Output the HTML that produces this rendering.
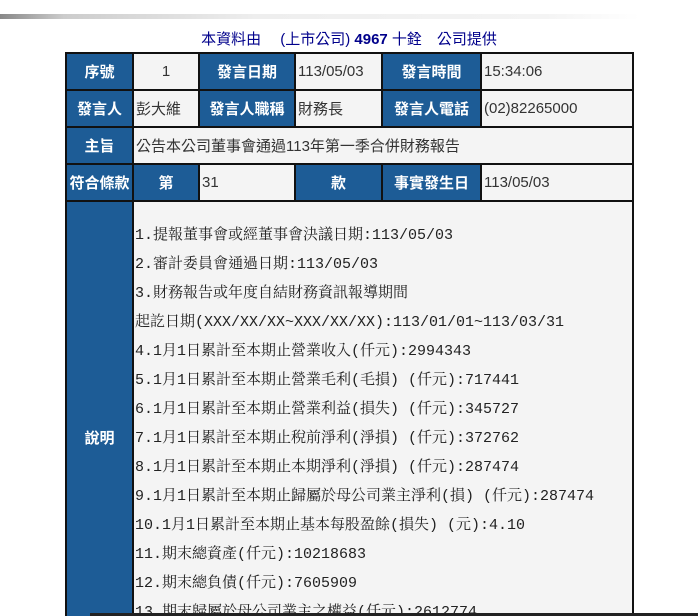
<!DOCTYPE html>
<html><head><meta charset="utf-8"><style>
html,body{margin:0;width:698px;height:616px;overflow:hidden;background:#fff}
body{font-family:"Liberation Sans","Noto Sans CJK TC",sans-serif;position:relative}
.wrap{position:absolute;left:0;top:0;width:698px;height:616px;overflow:hidden}
.bar{position:absolute;top:14px;left:0;width:640px;height:5px;background:linear-gradient(90deg,#888 0,#ccc 10%,#eee 40%,#f4f4f4 85%,#fff 100%)}
.title{position:absolute;top:28px;left:0;width:698px;text-align:center;color:#00008b;font-size:15px}
table{position:absolute;top:52px;left:65px;border-collapse:collapse;table-layout:fixed;width:567px}
td{border:2px solid #111;height:35px;padding:0 2px;font-size:15px;color:#333;background:#f4f4f4;overflow:hidden;white-space:nowrap}
td.h{background:#1d5c96;color:#fff;font-weight:bold;text-align:center;padding:0}
.desc{font-family:"Liberation Mono","Noto Serif CJK TC",monospace;font-size:15px;line-height:29px;padding:19px 0 0 1px;vertical-align:top;height:452px;color:#222}
.sb{position:absolute;top:613px;left:90px;width:608px;height:3px;background:#222}
</style></head><body><div class="wrap">
<div class="bar"></div>
<div class="title">本資料由　 (上市公司) <b>4967</b> 十銓　公司提供</div>
<table>
<colgroup><col style="width:67px"><col style="width:66px"><col style="width:96px"><col style="width:87px"><col style="width:99px"><col style="width:152px"></colgroup>
<tr><td class="h">序號</td><td style="text-align:center">1</td><td class="h">發言日期</td><td>113/05/03</td><td class="h">發言時間</td><td>15:34:06</td></tr>
<tr><td class="h">發言人</td><td>彭大維</td><td class="h">發言人職稱</td><td>財務長</td><td class="h">發言人電話</td><td>(02)82265000</td></tr>
<tr><td class="h">主旨</td><td colspan="5">公告本公司董事會通過113年第一季合併財務報告</td></tr>
<tr><td class="h">符合條款</td><td class="h">第</td><td>31</td><td class="h">款</td><td class="h">事實發生日</td><td>113/05/03</td></tr>
<tr><td class="h">說明</td><td colspan="5" class="desc">1.提報董事會或經董事會決議日期:113/05/03<br>2.審計委員會通過日期:113/05/03<br>3.財務報告或年度自結財務資訊報導期間<br>起訖日期(XXX/XX/XX~XXX/XX/XX):113/01/01~113/03/31<br>4.1月1日累計至本期止營業收入(仟元):2994343<br>5.1月1日累計至本期止營業毛利(毛損) (仟元):717441<br>6.1月1日累計至本期止營業利益(損失) (仟元):345727<br>7.1月1日累計至本期止稅前淨利(淨損) (仟元):372762<br>8.1月1日累計至本期止本期淨利(淨損) (仟元):287474<br>9.1月1日累計至本期止歸屬於母公司業主淨利(損) (仟元):287474<br>10.1月1日累計至本期止基本每股盈餘(損失) (元):4.10<br>11.期末總資產(仟元):10218683<br>12.期末總負債(仟元):7605909<br>13.期末歸屬於母公司業主之權益(仟元):2612774</td></tr>
</table>
<div class="sb"></div>
</div></body></html>
